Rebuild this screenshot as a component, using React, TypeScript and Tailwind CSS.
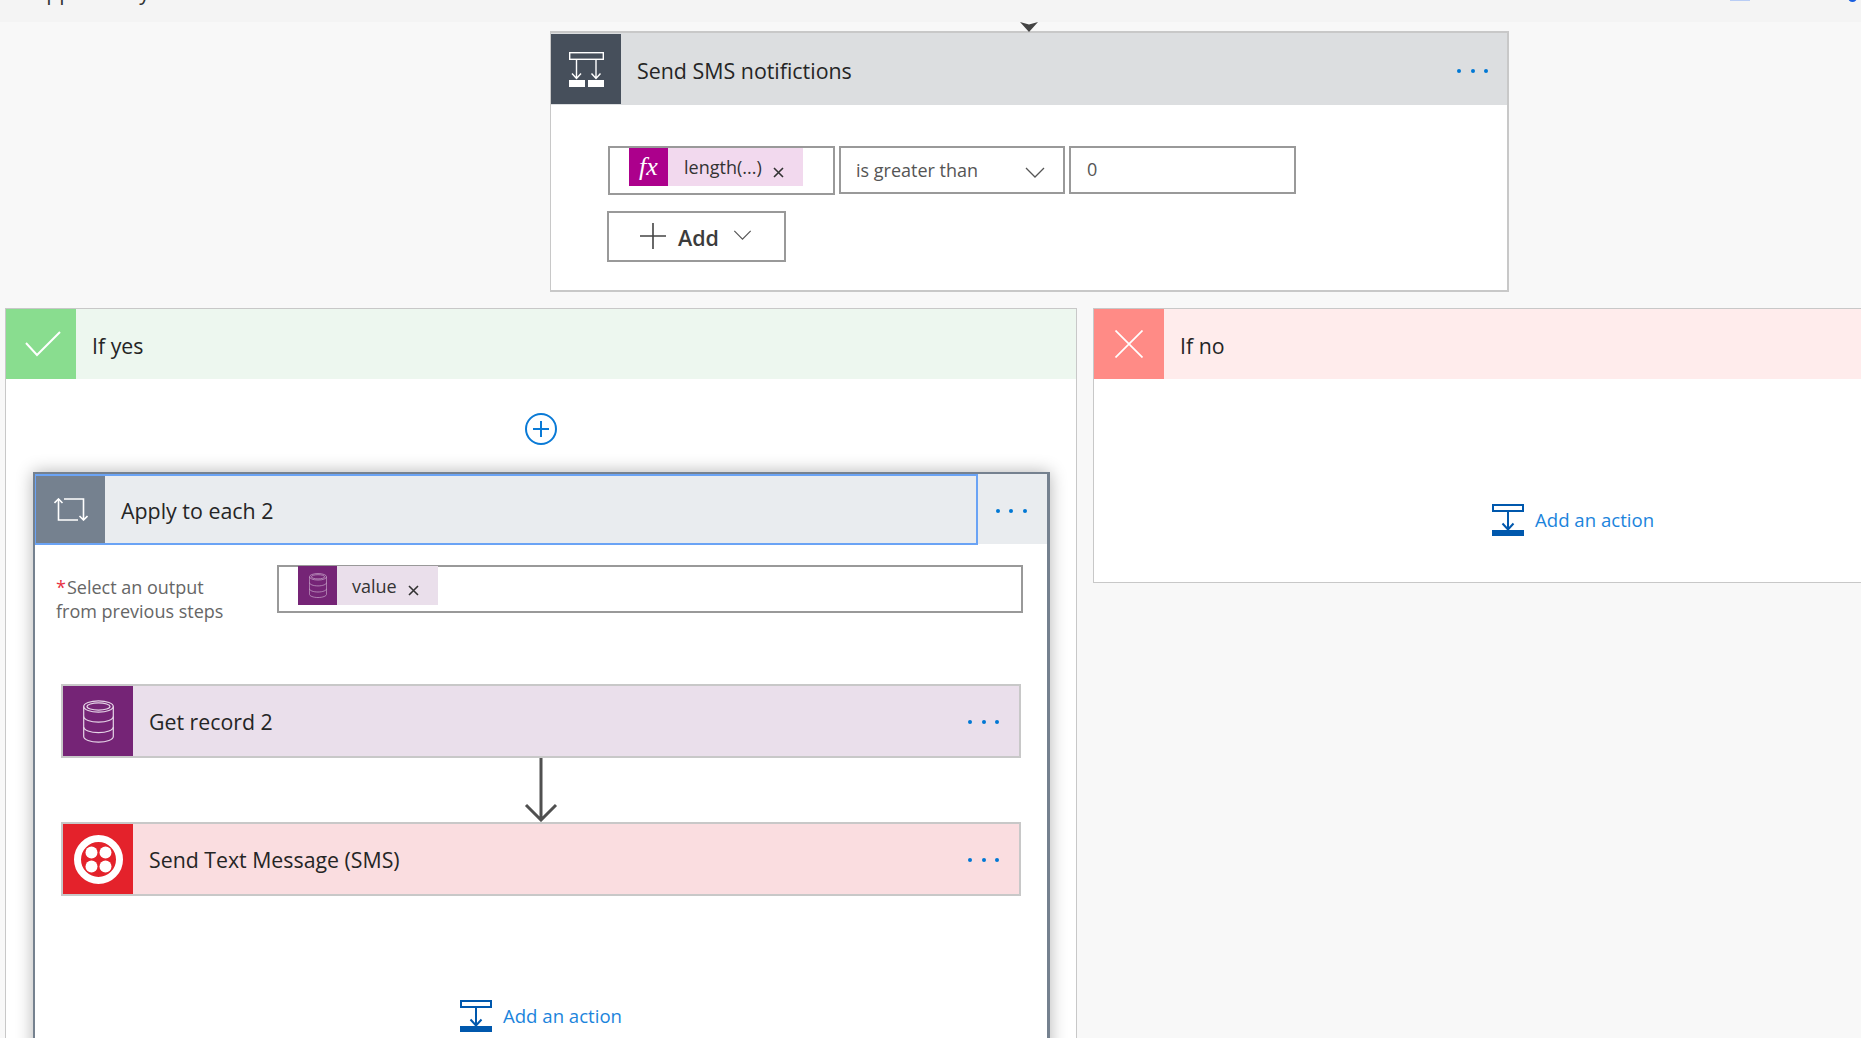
import React from "react";

const font = "font-['Open_Sans','Noto_Sans',sans-serif]";

function Dots({ className = "" }: { className?: string }) {
  return (
    <div className={"flex gap-[9.300px] " + className}>
      <span className="h-[4px] w-[4px] rounded-full bg-[#0078d4]" />
      <span className="h-[4px] w-[4px] rounded-full bg-[#0078d4]" />
      <span className="h-[4px] w-[4px] rounded-full bg-[#0078d4]" />
    </div>
  );
}

function DbIcon({ w, h, color = "#e6d5e8" }: { w: number; h: number; color?: string }) {
  return (
    <svg width={w} height={h} viewBox="0 0 31 43" fill="none" stroke={color} strokeWidth="1.2">
      <ellipse cx="15.5" cy="6.5" rx="14.8" ry="5.6" />
      <ellipse cx="15.5" cy="6.5" rx="11.5" ry="3.6" />
      <path d="M0.7 6.5V36.5C0.7 39.6 7.3 42.2 15.5 42.2S30.3 39.6 30.3 36.5V6.5" />
      <path d="M0.7 16.5C0.7 19.6 7.3 22.2 15.5 22.2S30.3 19.6 30.3 16.5" />
      <path d="M0.7 27C0.7 30.1 7.3 32.7 15.5 32.7S30.3 30.1 30.3 27" />
    </svg>
  );
}

function AddAction({ className = "" }: { className?: string }) {
  return (
    <div className={"flex items-center gap-[11px] " + className}>
      <svg width="32" height="32" viewBox="0 0 32 32" fill="none" stroke="#0058ad" strokeWidth="2">
        <rect x="1" y="1" width="30" height="6" />
        <path d="M16 7V25M10.5 19.5L16 25.5L21.5 19.5" />
        <rect x="0" y="26" width="32" height="6" fill="#0058ad" stroke="none" />
      </svg>
      <span className="text-[18.6px] leading-none text-[#1c84dc]">Add an action</span>
    </div>
  );
}

function Token({
  icon,
  iconClass,
  bg,
  label,
  width,
  height,
  labelGap,
  className = "",
}: {
  icon: React.ReactNode;
  iconClass: string;
  bg: string;
  label: string;
  width: string;
  height: string;
  labelGap: string;
  className?: string;
}) {
  return (
    <div className={`flex items-stretch ${width} ${height} ${bg} ${className}`}>
      <div className={`flex w-[39px] shrink-0 items-center justify-center ${iconClass}`}>{icon}</div>
      <span className={`self-center text-[18px] leading-none text-[#333] ${labelGap}`}>{label}</span>
      <svg className="ml-[11px] mt-[19px]" width="11" height="11" viewBox="0 0 11 11" stroke="#333" strokeWidth="1.6">
        <path d="M1 1L10 10M10 1L1 10" />
      </svg>
    </div>
  );
}

function Chevron({ w, h, color = "#555" }: { w: number; h: number; color?: string }) {
  return (
    <svg width={w} height={h} viewBox="0 0 20 11" fill="none" stroke={color} strokeWidth="1.3">
      <path d="M1 1L10 10L19 1" />
    </svg>
  );
}

function ActionCard({
  icon,
  iconBg,
  bg,
  title,
  className = "",
}: {
  icon: React.ReactNode;
  iconBg: string;
  bg: string;
  title: string;
  className?: string;
}) {
  return (
    <div className={`flex h-[74px] w-[960px] border-2 border-[#c8c8c8] ${bg} ${className}`}>
      <div className={`flex w-[70px] shrink-0 items-center justify-center ${iconBg}`}>{icon}</div>
      <div className="flex-1 pl-[16px] text-[21.3px] leading-[72px] text-[#252525]">{title}</div>
      <Dots className="mr-[20px] mt-[34px]" />
    </div>
  );
}

function Twilio() {
  return (
    <svg width="49" height="49" viewBox="0 0 49 49">
      <circle cx="24.5" cy="24.5" r="21" fill="none" stroke="#fff" strokeWidth="7" />
      <circle cx="17.5" cy="17.5" r="6" fill="#fff" />
      <circle cx="31.5" cy="17.5" r="6" fill="#fff" />
      <circle cx="17.5" cy="31.5" r="6" fill="#fff" />
      <circle cx="31.5" cy="31.5" r="6" fill="#fff" />
    </svg>
  );
}

export default function App() {
  return (
    <div className={`h-[1038px] w-[1861px] overflow-hidden bg-[#f8f8f8] ${font}`}>
      {/* top strip */}
      <div className="relative h-[22px] overflow-hidden bg-[#f4f4f4]">
        <span className="absolute left-[30px] top-[-22px] whitespace-nowrap text-[21px] leading-[28px] text-[#333]">Opportunity</span>
        <span className="absolute left-[1730px] top-[-19px] h-[20px] w-[20px] bg-[#b9cdf5]" />
        <span className="absolute left-[1848px] top-[-7px] h-[9px] w-[9px] rounded-full bg-[#1a5fe0]" />
      </div>

      {/* condition card */}
      <div className="relative ml-[550px] mt-[9px] h-[261px] w-[959px] border-2 border-l border-[#c8c8c8] bg-white">
        <svg className="absolute left-[469px] top-[-11px]" width="18" height="10" viewBox="0 0 18 10">
          <path d="M0 0L9 2.500L18 0L9 10Z" fill="#444" />
        </svg>
        <div className="flex h-[72px] bg-[#dcdee0]">
          <div className="mt-[1px] flex h-[70px] w-[70px] shrink-0 items-center justify-center bg-[#464f5b]">
            <svg width="35" height="35" viewBox="0 0 35 35" fill="none" stroke="#fff" strokeWidth="1.4">
              <rect x="0.7" y="0.7" width="33.6" height="6.6" />
              <path d="M7.500 7V26M3 21.500L7.500 26.500L12 21.500M27 7V26M22.500 21.500L27 26.500L31.500 21.500" />
              <rect x="0" y="28" width="16" height="7" fill="#fff" stroke="none" />
              <rect x="19" y="28" width="16" height="7" fill="#fff" stroke="none" />
            </svg>
          </div>
          <div className="flex-1 pl-[16px] text-[21.4px] leading-[75px] text-[#252525]">Send SMS notifictions</div>
          <Dots className="mr-[19px] mt-[36px]" />
        </div>

        <div className="ml-[57px] mt-[41px] flex gap-[4px]">
          <div className="h-[49px] w-[227px] border-2 border-[#999] pl-[19px]">
            <Token
              icon={<span className="font-['Liberation_Serif',serif] text-[26px] italic leading-none text-white">fx</span>}
              iconClass="bg-[#ac008c]"
              bg="bg-[#f2d9ee]"
              label="length(...)"
              width="w-[174px]"
              height="h-[38px]"
              labelGap="ml-[16px]"
            />
          </div>
          <div className="flex h-[48px] w-[226px] items-center justify-between border-2 border-[#999] pl-[15px] pr-[18px]">
            <span className="text-[18px] leading-none text-[#555]">is greater than</span>
            <span className="mt-[4px]"><Chevron w={20} h={11} /></span>
          </div>
          <div className="flex h-[48px] w-[227px] items-center border-2 border-[#999] pl-[16px]">
            <span className="pb-[2px] text-[18px] leading-none text-[#555]">0</span>
          </div>
        </div>

        <div className="ml-[56px] mt-[16px] flex h-[51px] w-[179px] items-center border-2 border-[#999] pl-[31px]">
          <svg className="mb-[1px]" width="26" height="26" viewBox="0 0 26 26" stroke="#444" strokeWidth="1.6">
            <path d="M13 0V26M0 13H26" />
          </svg>
          <span className="ml-[12px] mt-[2px] text-[21.5px] font-semibold leading-none text-[#3c3c3c]">Add</span>
          <span className="mb-[4px] ml-[14px]"><Chevron w={19} h={10} /></span>
        </div>
      </div>

      {/* branches */}
      <div className="mt-[16px] flex items-start pl-[5px]">
        {/* If yes */}
        <div className="h-[730px] w-[1072px] shrink-0 border-x border-t border-[#c8c8c8] bg-white">
          <div className="flex h-[70px] bg-[#edf7ef]">
            <div className="flex w-[70px] items-center justify-center bg-[#89dd8f]">
              <svg className="ml-[3px]" width="36" height="26" viewBox="0 0 36 26" fill="none" stroke="#fff" strokeWidth="2">
                <path d="M1 12L12 24L35 1" />
              </svg>
            </div>
            <div className="flex-1 pl-[16px] text-[21.3px] leading-[74px] text-[#252525]">If yes</div>
          </div>

          <div className="flex justify-center pr-[1px] pt-[34px]">
            <div className="flex h-[32px] w-[32px] items-center justify-center rounded-full border-2 border-[#0a7ad6] bg-white">
              <svg width="16" height="16" viewBox="0 0 16 16" stroke="#0a7ad6" strokeWidth="2">
                <path d="M8 0V16M0 8H16" />
              </svg>
            </div>
          </div>

          {/* apply to each */}
          <div className="ml-[27px] mt-[27px] h-[600px] w-[1017px] border-x-2 border-t-2 border-r-[3px] border-[#75818f] bg-white shadow-[0_0_16px_rgba(0,0,0,0.3)]">
            <div className="flex h-[70px] bg-[#e9ecef]">
              <div className="flex h-[71px] w-[943px] shrink-0 border-2 border-l border-[#6aa3f5] bg-[#e9ecef]">
                <div className="flex w-[69px] shrink-0 items-center justify-center bg-[#75818f]">
                  <svg width="34" height="23" viewBox="0 0 34 23" fill="none" stroke="#fff" strokeWidth="1.6">
                    <path d="M4.500 1V22H24" />
                    <path d="M0.500 5L4.500 1L8.500 5" />
                    <path d="M10 1H29.500V22M25.500 18L29.500 22L33.500 18" />
                  </svg>
                </div>
                <div className="flex-1 pl-[16px] text-[21.4px] leading-[69px] text-[#252525]">Apply to each 2</div>
              </div>
              <Dots className="ml-[18px] mt-[35px]" />
            </div>

            <div className="ml-[21px] mt-[21px] flex">
              <div className="mt-[10px] w-[221px] text-[18px] leading-[24px] text-[#666]">
                <span className="mr-[1px] text-[#e8303f]">*</span>Select an output
                <br />
                from previous steps
              </div>
              <div className="h-[48px] w-[746px] border-2 border-[#999] pl-[19px]">
                <Token
                  icon={<DbIcon w={18} h={25} color="#c9a9cd" />}
                  iconClass="bg-[#752476]"
                  bg="bg-[#eadfeb]"
                  label="value"
                  width="w-[140px]"
                  height="h-[39px]"
                  labelGap="ml-[15px]"
                  className="-mt-[1px]"
                />
              </div>
            </div>

            <ActionCard
              className="ml-[26px] mt-[61px]"
              icon={<DbIcon w={31} h={43} />}
              iconBg="bg-[#752476]"
              bg="bg-[#eadfeb]"
              title="Get record 2"
            />
            <div className="ml-[26px] flex h-[64px] w-[960px] justify-center">
              <svg width="34" height="64" viewBox="0 0 34 64" fill="none" stroke="#505050" strokeWidth="3">
                <path d="M17 0V62M2 47L17 62L32 47" />
              </svg>
            </div>
            <ActionCard
              className="ml-[26px]"
              icon={<Twilio />}
              iconBg="bg-[#e4222b]"
              bg="bg-[#fadde0]"
              title="Send Text Message (SMS)"
            />
            <div className="mt-[104px] flex w-[1012px] justify-center">
              <AddAction />
            </div>
          </div>
        </div>

        {/* If no */}
        <div className="ml-[16px] h-[275px] w-[800px] shrink-0 border border-[#c8c8c8] border-r-0 bg-white">
          <div className="flex h-[70px] bg-[#ffecec]">
            <div className="flex w-[70px] items-center justify-center bg-[#ff8b86]">
              <svg width="28" height="28" viewBox="0 0 28 28" stroke="#fff" strokeWidth="1.7">
                <path d="M0.500 0.500L27.500 27.500M27.500 0.500L0.500 27.500" />
              </svg>
            </div>
            <div className="flex-1 pl-[16px] text-[21.3px] leading-[74px] text-[#252525]">If no</div>
          </div>
          <div className="flex justify-start pl-[398px] pt-[125px]">
            <AddAction />
          </div>
        </div>
      </div>
    </div>
  );
}
